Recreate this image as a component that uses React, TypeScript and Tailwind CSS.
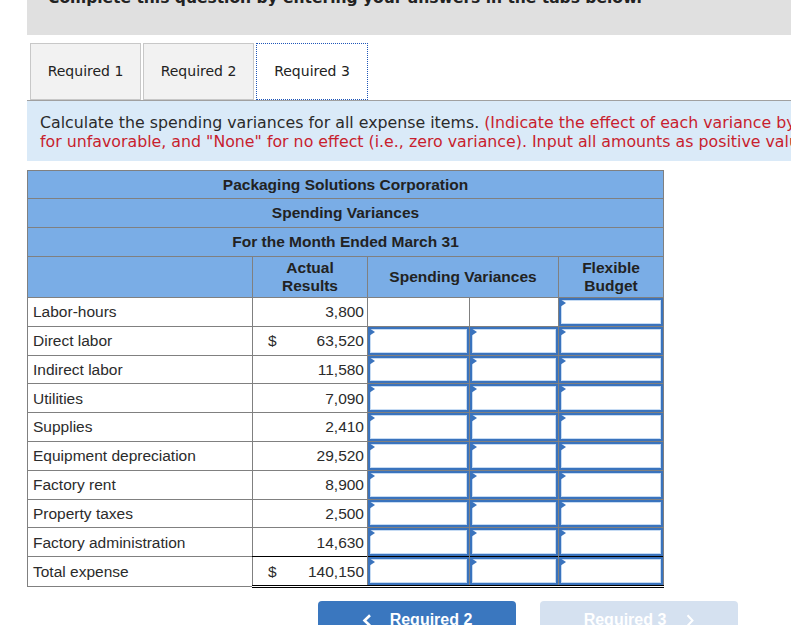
import React from "react"

const verdana = { fontFamily: '"DejaVu Sans", Verdana, sans-serif' }
const arial = { fontFamily: '"Liberation Sans", Arial, sans-serif' }

type Row = { label: string; actual: string; dollar?: boolean; plain?: boolean }

const rows: Row[] = [
  { label: "Labor-hours", actual: "3,800", plain: true },
  { label: "Direct labor", actual: "63,520", dollar: true },
  { label: "Indirect labor", actual: "11,580" },
  { label: "Utilities", actual: "7,090" },
  { label: "Supplies", actual: "2,410" },
  { label: "Equipment depreciation", actual: "29,520" },
  { label: "Factory rent", actual: "8,900" },
  { label: "Property taxes", actual: "2,500" },
  { label: "Factory administration", actual: "14,630" },
]

function InputBox() {
  return (
    <div className="relative h-[27.8px] border-2 border-[#3a73bd] bg-white shadow-[inset_0_0_0_1px_#c6dbf3]">
      <span className="absolute -left-[1px] -top-[1px] h-0 w-0 border-y-[4px] border-l-[6px] border-y-transparent border-l-[#3a73bd]" />
    </div>
  )
}

function Tab({ label, active }: { label: string; active?: boolean }) {
  return (
    <div
      className={
        active
          ? "flex h-[57px] w-[112px] items-center justify-center border border-dotted border-[#1f56b8] bg-white text-[14px] text-[#222]"
          : "flex h-[57px] w-[111px] items-center justify-center border border-[#c8c8c8] bg-[#f2f2f2] text-[14px] text-[#222]"
      }
      style={verdana}
    >
      {label}
    </div>
  )
}

export default function App() {
  const cell = "border border-[#808080]"
  const head = "border border-[#808080] bg-[#7aade6] text-center font-bold text-[#222]"
  const total = "border border-b-[3px] border-double border-[#808080] border-t-black border-b-black"

  return (
    <div className="h-[625px] w-[791px] overflow-hidden bg-white">
      <div className="ml-[27px] w-[1002px]">
        {/* question banner, cut off at the top */}
        <div className="h-[35px] overflow-hidden bg-[#e0e0e0]">
          <p className="-mt-[12px] pl-[21px] text-[15.5px] font-bold leading-[20px] text-[#222]" style={verdana}>
            Complete this question by entering your answers in the tabs below.
          </p>
        </div>

        {/* tabs */}
        <div className="mt-[8px] flex gap-[2px] border-b border-[#a0a0a0] pl-[3px]">
          <Tab label="Required 1" />
          <Tab label="Required 2" />
          <Tab label="Required 3" active />
        </div>

        {/* instructions */}
        <div
          className="h-[60px] whitespace-nowrap bg-[#daeaf8] pl-[13px] pt-[12px] text-[15.8px] leading-[19px] text-[#2b2b2b]"
          style={verdana}
        >
          Calculate the spending variances for all expense items.{" "}
          <span className="text-[#c81e2e]">
            (Indicate the effect of each variance by selecting "F" for favorable, "U"
            <br />
            for unfavorable, and "None" for no effect (i.e., zero variance). Input all amounts as positive values.)
          </span>
        </div>

        {/* variance table */}
        <table className="mt-[9px] w-[636px] table-fixed border-collapse text-[15.5px] text-[#2b2b2b]" style={arial}>
          <colgroup>
            <col className="w-[225px]" />
            <col className="w-[115px]" />
            <col className="w-[102px]" />
            <col className="w-[89px]" />
            <col className="w-[105px]" />
          </colgroup>
          <tbody>
            <tr className="h-[28px]">
              <td colSpan={5} className={head}>Packaging Solutions Corporation</td>
            </tr>
            <tr className="h-[29px]">
              <td colSpan={5} className={head}>Spending Variances</td>
            </tr>
            <tr className="h-[29px]">
              <td colSpan={5} className={head}>For the Month Ended March 31</td>
            </tr>
            <tr className="h-[41px]">
              <td className={head}></td>
              <td className={`${head} leading-[18px]`}>
                Actual
                <br />
                Results
              </td>
              <td colSpan={2} className={head}>Spending Variances</td>
              <td className={`${head} leading-[18px]`}>
                Flexible
                <br />
                Budget
              </td>
            </tr>

            {rows.map((r, i) => {
              const edge = i === rows.length - 1 ? "border-b-black" : ""
              return (
                <tr key={r.label} className="h-[28.8px]">
                  <td className={`${cell} pl-[5px]`}>{r.label}</td>
                  <td className={`${cell} ${edge} pl-[15px] pr-[3px]`}>
                    <div className="flex justify-between">
                      <span>{r.dollar ? "$" : ""}</span>
                      <span>{r.actual}</span>
                    </div>
                  </td>
                  <td className={`${cell} ${edge} p-0`}>{r.plain ? null : <InputBox />}</td>
                  <td className={`${cell} ${edge} p-0`}>{r.plain ? null : <InputBox />}</td>
                  <td className={`${cell} ${edge} p-0`}>
                    <InputBox />
                  </td>
                </tr>
              )
            })}

            <tr className="h-[30px]">
              <td className={`${cell} pl-[5px]`}>Total expense</td>
              <td className={`${total} pl-[15px] pr-[3px]`}>
                <div className="flex justify-between">
                  <span>$</span>
                  <span>140,150</span>
                </div>
              </td>
              <td className={`${total} p-0`}>
                <InputBox />
              </td>
              <td className={`${total} p-0`}>
                <InputBox />
              </td>
              <td className={`${total} p-0`}>
                <InputBox />
              </td>
            </tr>
          </tbody>
        </table>

        {/* navigation */}
        <div className="mt-[13px] flex justify-center gap-[24px]" style={arial}>
          <button className="flex h-[38px] w-[198px] items-center justify-center gap-[18px] rounded-[4px] bg-[#3a77bf] text-[16px] font-bold text-white">
            <svg width="10" height="13" viewBox="0 0 10 13" fill="none" stroke="currentColor" strokeWidth="2.6">
              <path d="M8 1.2 L2.5 6.5 L8 11.8" />
            </svg>
            Required 2
          </button>
          <button className="flex h-[38px] w-[198px] items-center justify-center gap-[20px] rounded-[4px] bg-[#d5e1f0] text-[16px] font-bold text-white">
            Required 3
            <svg width="8" height="13" viewBox="0 0 8 13" fill="none" stroke="currentColor" strokeWidth="2">
              <path d="M1.5 1.2 L6.5 6.5 L1.5 11.8" />
            </svg>
          </button>
        </div>
      </div>
    </div>
  )
}
